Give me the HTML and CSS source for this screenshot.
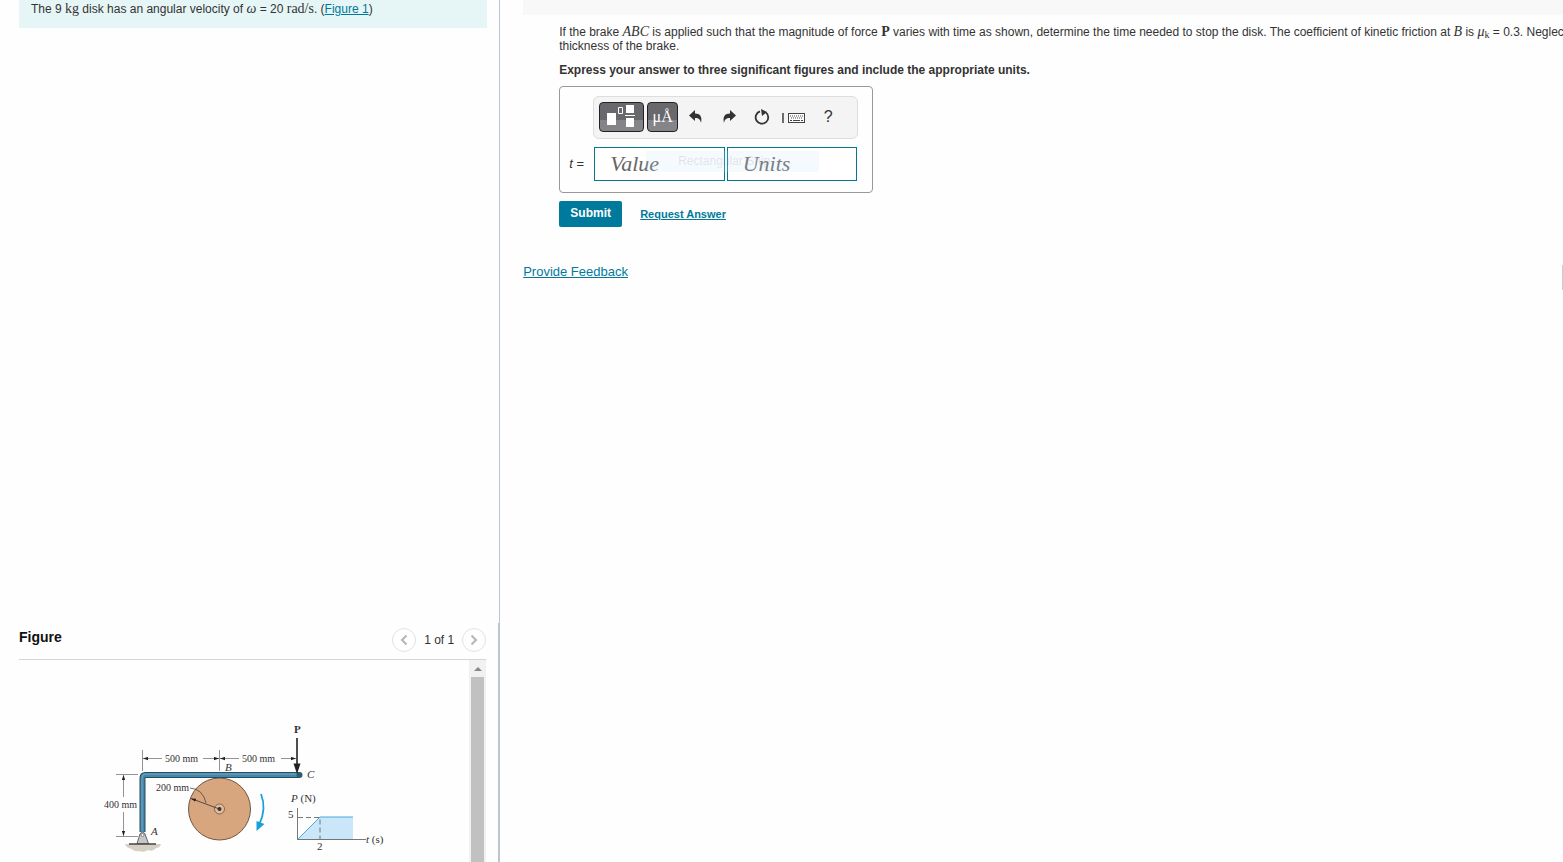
FILE: index.html
```html
<!DOCTYPE html>
<html lang="en">
<head>
  <meta charset="UTF-8">
  <title>Disk and brake</title>
  <link rel="stylesheet" href="styles.css">
</head>
<body>
  <div class="page">
    <aside class="left">
      <p class="intro">The 9 <span class="math">kg</span> disk has an angular velocity of <i class="math">ω</i> = 20 <span class="math">rad/s</span>. (<a href="#figure">Figure 1</a>)</p>

      <section class="figure" id="figure">
        <header class="figure-head">
          <h2>Figure</h2>
          <div class="pager">
            <button type="button" class="round" aria-label="Previous figure">
              <svg width="8" height="12" viewBox="0 0 8 12"><path d="M6.500 1.500 2 6l4.500 4.500"/></svg>
            </button>
            <span>1 of 1</span>
            <button type="button" class="round" aria-label="Next figure">
              <svg width="8" height="12" viewBox="0 0 8 12"><path d="M1.500 1.500 6 6l-4.500 4.500"/></svg>
            </button>
          </div>
        </header>
        <div class="figure-body">
          <svg class="diagram" width="450" height="202" viewBox="19 660 450 202">
            <defs>
              <marker id="tip" viewBox="0 0 6 4" refX="6" refY="2" markerWidth="5" markerHeight="4" markerUnits="userSpaceOnUse" orient="auto-start-reverse">
                <path d="M0 0 6 2 0 4z" fill="#222"/>
              </marker>
            </defs>
            <!-- dimensions -->
            <g stroke="#777" stroke-width="0.8" fill="none">
              <path d="M142.500 750v21M219.500 750v21M116 774.500h22M116 836.500h22"/>
              <path d="M162 758.500H143" marker-end="url(#tip)"/>
              <path d="M203 758.500H219" marker-end="url(#tip)"/>
              <path d="M239 758.500H220" marker-end="url(#tip)"/>
              <path d="M281 758.500H296" marker-end="url(#tip)"/>
              <path d="M123.500 797V775" marker-end="url(#tip)"/>
              <path d="M123.500 812V836" marker-end="url(#tip)"/>
            </g>
            <!-- ground and support -->
            <path d="M125 844h36q-1 4-5 4-3 4-8 2-4 3-9 1-5 1-7-2-6-1-7-5z" fill="#d5d0c3"/>
            <path d="M129 844h27" stroke="#444" stroke-width="1.500"/>
            <path d="M137 843.500 140 834q2.500-4 5 0l3.500 9.500z" fill="#c3c7ca" stroke="#444" stroke-width="0.800"/>
            <!-- disk -->
            <circle cx="219.500" cy="809" r="31" fill="#d7a67e" stroke="#715642"/>
            <circle cx="219.500" cy="809" r="5" fill="#e3bd9b" stroke="#715642" stroke-width="0.800"/>
            <circle cx="219.500" cy="809" r="2" fill="#333"/>
            <path d="M218 808.500 191 798.500" stroke="#333" stroke-width="0.800" marker-end="url(#tip)"/>
            <path d="M190 788q13 1 16 15" fill="none" stroke="#444" stroke-width="0.800"/>
            <!-- brake -->
            <path d="M142.500 832V778q0-3 3-3H300" fill="none" stroke="#234d62" stroke-width="6"/>
            <path d="M142.500 832V778q0-3 3-3H299" fill="none" stroke="#4686a8" stroke-width="4"/>
            <path d="M142 831V778q0-4 4-4H298" fill="none" stroke="#70a7c0" stroke-width="1"/>
            <circle cx="299.500" cy="775" r="3" fill="#2d5b72"/>
            <circle cx="142.500" cy="835" r="1.500" fill="#fff" stroke="#444" stroke-width="0.600"/>
            <!-- force and rotation -->
            <path d="M297 738v27" stroke="#222" stroke-width="1.600"/>
            <path d="M293.500 763.500h7L297 774z" fill="#222"/>
            <path d="M261 794q6 15-2 31" fill="none" stroke="#18a0dc" stroke-width="1.800"/>
            <path d="M256.500 831v-10l8 3z" fill="#18a0dc"/>
            <!-- force plot -->
            <path d="M297.500 839.500 320 817h33v22.500z" fill="#c9e7f9"/>
            <path d="M297.500 839.500 320 817h33" fill="none" stroke="#4aa9dc"/>
            <path d="M297.500 808v31.500H366" fill="none" stroke="#555" stroke-width="0.800"/>
            <path d="M298 817.500h22V839" fill="none" stroke="#555" stroke-width="0.800" stroke-dasharray="5 3"/>
            <g class="diagram-text">
              <g class="dimension">
                <text x="165" y="762">500 mm</text>
                <text x="242" y="762">500 mm</text>
                <text x="156" y="791">200 mm</text>
                <text x="104" y="808">400 mm</text>
              </g>
              <text x="294" y="733" font-weight="bold">P</text>
              <text x="225" y="771" font-style="italic">B</text>
              <text x="307" y="778" font-style="italic">C</text>
              <text x="151" y="835" font-style="italic">A</text>
              <text x="291" y="802"><tspan font-style="italic">P</tspan> (N)</text>
              <text x="288" y="818">5</text>
              <text x="317" y="850">2</text>
              <text x="366" y="843"><tspan font-style="italic">t</tspan> (s)</text>
            </g>
          </svg>
          <div class="scroll-track">
            <div class="scroll-up"></div>
            <div class="scroll-thumb"></div>
          </div>
        </div>
      </section>
    </aside>

    <main class="right">
      <div class="part-bar"></div>
      <form class="part">
        <p class="question">If the brake <i class="math">ABC</i> is applied such that the magnitude of force <b class="math">P</b> varies with time as shown, determine the time needed to stop the disk. The coefficient of kinetic friction at <i class="math">B</i> is <i class="math">μ</i><span class="math sub">k</span> = 0.3. Neglect the<br>thickness of the brake.</p>
        <p class="instruction">Express your answer to three significant figures and include the appropriate units.</p>

        <div class="answer">
          <div class="toolbar">
            <button type="button" class="dark wide" aria-label="Templates">
              <svg width="32" height="26" viewBox="0 0 32 26">
                <path d="M1 9h9v12H1zM20 1h8v8h-8zM20 14h8v9h-8zM19 11h10v1H19z" fill="#fff"/>
                <path d="M12.500 3.500h4v6h-4z" fill="none" stroke="#fff"/>
              </svg>
            </button>
            <button type="button" class="dark">μÅ</button>
            <button type="button" class="tool" aria-label="Undo">
              <svg width="14" height="14" viewBox="0 0 14 14"><path d="M6 0v3.500c5 0 7.500 3 6 9.500-.6-3.500-2-5-6-5V11L0 5.500z" fill="#333"/></svg>
            </button>
            <button type="button" class="tool" aria-label="Redo">
              <svg width="14" height="14" viewBox="0 0 14 14"><path d="M8 0v3.500C3 3.500.5 6.500 2 13c.6-3.500 2-5 6-5v3l6-5.500z" fill="#333"/></svg>
            </button>
            <button type="button" class="tool" aria-label="Reset">
              <svg width="16" height="16" viewBox="0 0 16 16"><path d="M11.800 3.400A6.300 6.300 0 1 1 6 2.400" fill="none" stroke="#333" stroke-width="1.800"/><path d="M7 0l6 3-5 4z" fill="#333"/></svg>
            </button>
            <button type="button" class="tool" aria-label="Keyboard">
              <svg width="28" height="14" viewBox="0 0 28 14">
                <path d="M2 3v10" stroke="#333" stroke-width="1.400"/>
                <rect x="7.500" y="3.500" width="16" height="9" fill="#fff" stroke="#444"/>
                <path d="M9 6h13M10 8h12" stroke="#444" stroke-dasharray="1 1"/><path d="M9 10.500h2M12 10.500h7M20 10.500h2" stroke="#444"/>
              </svg>
            </button>
            <button type="button" class="tool help">?</button>
          </div>
          <label class="answer-label" for="value"><i>t</i> =</label>
          <div class="fields">
            <input type="text" id="value" placeholder="Value">
            <input type="text" id="units" placeholder="Units" aria-label="Units">
            <span class="ghost">Rectangular Snip</span>
          </div>
        </div>

        <div class="actions">
          <button type="submit" class="submit">Submit</button>
          <a href="#answer">Request Answer</a>
        </div>
      </form>
      <div class="feedback">
        <a href="#feedback">Provide Feedback</a>
        <span class="edge-tab"></span>
      </div>
    </main>
  </div>
</body>
</html>
```
FILE: styles.css
```css
* {
  box-sizing: border-box;
}

body {
  margin: 0;
  font-family: "Liberation Sans", Arial, sans-serif;
  font-size: 12px;
  line-height: 14px;
  color: #333;
  background: #fefefe;
}

p, h2 {
  margin: 0;
}

a {
  color: #007a9c;
}

button {
  font-family: inherit;
  padding: 0;
  cursor: pointer;
}

.page {
  display: grid;
  grid-template-columns: 32% minmax(0, 1fr);
  height: 100vh;
  overflow: hidden;
}

.math {
  font-family: "Liberation Serif", serif;
  font-size: 14px;
  line-height: 1px;
}

.math.sub {
  font-size: 10px;
  vertical-align: -2px;
}

/* left column */
.left {
  display: flex;
  flex-direction: column;
  justify-content: space-between;
  background: linear-gradient(#b9c6d0, #b9c6d0) right / 1px 100% no-repeat;
}

.intro {
  margin-left: 19px;
  margin-right: 13px;
  padding: 2px 12px 12px;
  background: #e6f5f6;
}

.figure {
  border-right: 2px solid #b9c6d0;
  padding: 0 12px 0 19px;
}

.figure-head {
  display: flex;
  justify-content: space-between;
  align-items: center;
  height: 37px;
  border-bottom: 1px solid #d5d5d5;
}

.figure-head h2 {
  font-size: 14px;
  color: #111;
  padding-bottom: 8px;
}

.pager {
  display: flex;
  align-items: center;
  gap: 8px;
  padding-bottom: 2px;
}

.round {
  display: flex;
  align-items: center;
  justify-content: center;
  width: 24px;
  height: 24px;
  border: 1px solid #e2e2e2;
  border-radius: 50%;
  background: #fff;
}

.round path {
  fill: none;
  stroke: #b5b5b5;
  stroke-width: 2;
}

.figure-body {
  display: flex;
  justify-content: space-between;
}

.diagram-text {
  font-family: "Liberation Serif", serif;
  font-size: 11px;
  fill: #333;
}

.dimension {
  font-size: 10px;
}

.scroll-track {
  display: flex;
  flex-direction: column;
  align-items: center;
  width: 17px;
  background: #f1f1f1;
}

.scroll-up {
  margin: 7px 0 6px;
  border: 4px solid transparent;
  border-top: 0;
  border-bottom-color: #888;
}

.scroll-thumb {
  flex: 1;
  width: 13px;
  background: #c1c1c1;
}

/* right column */
.right {
  padding-left: 23px;
}

.part-bar {
  height: 15px;
  background: #f8f8f8;
}

.part {
  padding: 10px 0 0 36px;
}

.question {
  white-space: nowrap;
}

.instruction {
  margin-top: 10px;
  font-weight: bold;
}

.answer {
  display: grid;
  grid-template-columns: 24px 265px;
  row-gap: 8px;
  width: 314px;
  margin-top: 9px;
  padding: 9px 9px 11px;
  border: 1px solid #999;
  border-radius: 4px;
}

.toolbar {
  grid-column: 2;
  display: flex;
  align-items: center;
  gap: 3px;
  height: 43px;
  padding: 0 5px 2px;
  border: 1px solid #ddd;
  border-radius: 6px;
  background: #f4f4f4;
}

.dark {
  display: flex;
  align-items: center;
  justify-content: center;
  width: 31px;
  height: 30px;
  border: 1px solid #222;
  border-radius: 4px;
  background: linear-gradient(#69696d 60%, #858589 60%);
  color: #fff;
  font-family: "Liberation Serif", serif;
  font-size: 16px;
}

.dark.wide {
  width: 45px;
}

.tool {
  display: flex;
  align-items: center;
  justify-content: center;
  width: 30px;
  height: 30px;
  border: 0;
  background: none;
  color: #333;
}

.help {
  font-size: 16px;
}

.answer-label {
  align-self: center;
  font-size: 13px;
}

.fields {
  position: relative;
  display: flex;
  gap: 2px;
  padding: 0 1px;
}

.fields input {
  flex: 1;
  min-width: 0;
  height: 34px;
  padding: 0 15px;
  border: 1px solid #007a8c;
  font-family: "Liberation Serif", serif;
  font-size: 22px;
  font-style: italic;
}

.fields input::placeholder {
  color: #666;
}

/* faint drag tooltip lying over the two fields */
.ghost {
  position: absolute;
  left: 53px;
  top: 4px;
  width: 173px;
  height: 21px;
  padding: 3px 0 0 32px;
  background: rgba(205, 232, 250, 0.2);
  color: rgba(100, 100, 110, 0.16);
  pointer-events: none;
}

.actions {
  display: flex;
  align-items: center;
  gap: 18px;
  margin-top: 8px;
}

.actions a {
  font-size: 11px;
  font-weight: bold;
}

.submit {
  width: 63px;
  height: 26px;
  padding-bottom: 2px;
  border: 0;
  border-radius: 2px;
  background: #007a9c;
  color: #fff;
  font-size: 12px;
  font-weight: bold;
}

.feedback {
  display: flex;
  justify-content: space-between;
  align-items: flex-start;
  margin-top: 38px;
  font-size: 13px;
}

.edge-tab {
  width: 1px;
  height: 25px;
  background: #ccc;
}
```
